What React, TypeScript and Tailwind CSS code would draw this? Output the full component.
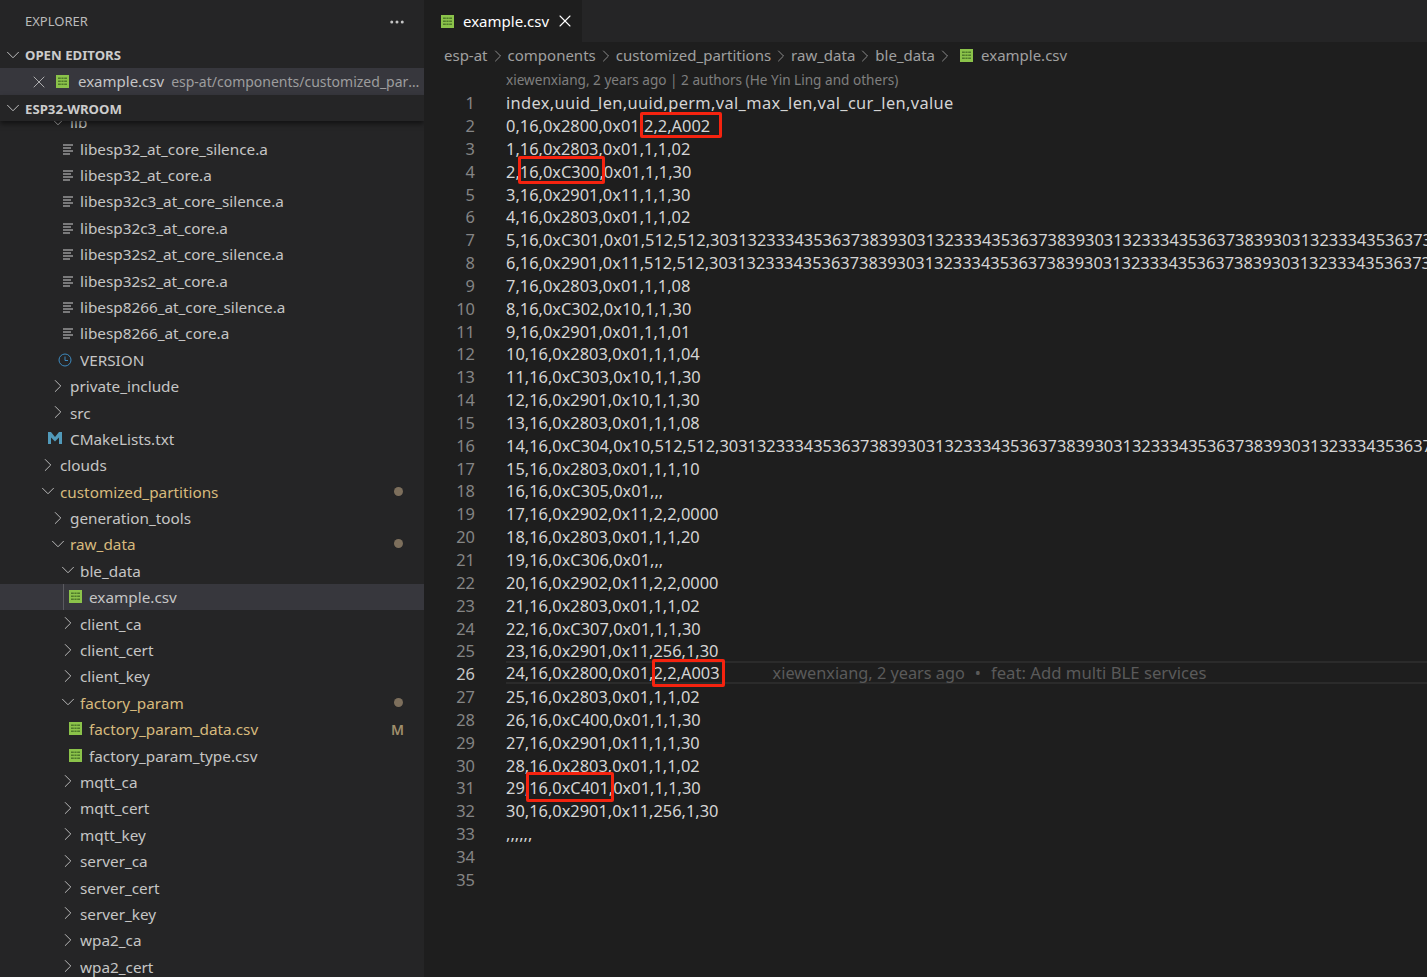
import React from 'react';
import { ChevronDown, ChevronRight, X, MoreHorizontal } from 'lucide-react';

const CsvIcon = ({ className }: { className?: string }) => (
    <svg viewBox="0 0 13 13" className={className}>
        <rect width="13" height="13" fill="#8bc34a" />
        <path fill="#4f7a2b" d="M2 2.5h2.8v1.5H2z M5.4 2.5h2.2v1.5H5.4z M8.2 2.5H11v1.5H8.2z M2 5.5h2.8V7H2z M5.4 5.5h2.2V7H5.4z M8.2 5.5H11V7H8.2z M2 8.5h2.8V10H2z M5.4 8.5h2.2V10H5.4z M8.2 8.5H11V10H8.2z" />
    </svg>
);

const LinesIcon = () => (
    <svg viewBox="0 0 10 11" className="h-[11px] w-[10px] shrink-0" stroke="#d0d0d0" strokeWidth="1.2">
        <path d="M0 1h10M0 4h8M0 7h10M0 10h7" />
    </svg>
);

const ClockIcon = () => (
    <svg viewBox="0 0 14 14" className="h-[14px] w-[14px] shrink-0" fill="none" stroke="#3d8abf" strokeWidth="1">
        <circle cx="7" cy="7" r="6" />
        <path d="M7 3.5V7.5H10" />
    </svg>
);

const CmakeIcon = () => (
    <svg viewBox="0 0 14 12" className="h-3 w-[14px] shrink-0" fill="#519aba">
        <path d="M0 12V0h3l4 5 4-5h3v12h-3V5.5L7 9.5 3 5.5V12z" />
    </svg>
);

type Row = {
    name: string;
    depth: number;
    kind: 'open' | 'closed' | 'lines' | 'clock' | 'cmake' | 'csv';
    tone?: 'modified';
    dot?: boolean;
    badge?: string;
    selected?: boolean;
};

const ROWS: Row[] = [
    { name: 'libesp32_at_core_silence.a', depth: 3, kind: 'lines' },
    { name: 'libesp32_at_core.a', depth: 3, kind: 'lines' },
    { name: 'libesp32c3_at_core_silence.a', depth: 3, kind: 'lines' },
    { name: 'libesp32c3_at_core.a', depth: 3, kind: 'lines' },
    { name: 'libesp32s2_at_core_silence.a', depth: 3, kind: 'lines' },
    { name: 'libesp32s2_at_core.a', depth: 3, kind: 'lines' },
    { name: 'libesp8266_at_core_silence.a', depth: 3, kind: 'lines' },
    { name: 'libesp8266_at_core.a', depth: 3, kind: 'lines' },
    { name: 'VERSION', depth: 3, kind: 'clock' },
    { name: 'private_include', depth: 2, kind: 'closed' },
    { name: 'src', depth: 2, kind: 'closed' },
    { name: 'CMakeLists.txt', depth: 2, kind: 'cmake' },
    { name: 'clouds', depth: 1, kind: 'closed' },
    { name: 'customized_partitions', depth: 1, kind: 'open', tone: 'modified', dot: true },
    { name: 'generation_tools', depth: 2, kind: 'closed' },
    { name: 'raw_data', depth: 2, kind: 'open', tone: 'modified', dot: true },
    { name: 'ble_data', depth: 3, kind: 'open' },
    { name: 'example.csv', depth: 4, kind: 'csv', selected: true },
    { name: 'client_ca', depth: 3, kind: 'closed' },
    { name: 'client_cert', depth: 3, kind: 'closed' },
    { name: 'client_key', depth: 3, kind: 'closed' },
    { name: 'factory_param', depth: 3, kind: 'open', tone: 'modified', dot: true },
    { name: 'factory_param_data.csv', depth: 4, kind: 'csv', tone: 'modified', badge: 'M' },
    { name: 'factory_param_type.csv', depth: 4, kind: 'csv' },
    { name: 'mqtt_ca', depth: 3, kind: 'closed' },
    { name: 'mqtt_cert', depth: 3, kind: 'closed' },
    { name: 'mqtt_key', depth: 3, kind: 'closed' },
    { name: 'server_ca', depth: 3, kind: 'closed' },
    { name: 'server_cert', depth: 3, kind: 'closed' },
    { name: 'server_key', depth: 3, kind: 'closed' },
    { name: 'wpa2_ca', depth: 3, kind: 'closed' },
    { name: 'wpa2_cert', depth: 3, kind: 'closed' },
];

const DIGITS = '30313233343536373839'.repeat(30);

const LINES = [
    'index,uuid_len,uuid,perm,val_max_len,val_cur_len,value',
    '0,16,0x2800,0x01,2,2,A002',
    '1,16,0x2803,0x01,1,1,02',
    '2,16,0xC300,0x01,1,1,30',
    '3,16,0x2901,0x11,1,1,30',
    '4,16,0x2803,0x01,1,1,02',
    '5,16,0xC301,0x01,512,512,' + DIGITS,
    '6,16,0x2901,0x11,512,512,' + DIGITS,
    '7,16,0x2803,0x01,1,1,08',
    '8,16,0xC302,0x10,1,1,30',
    '9,16,0x2901,0x01,1,1,01',
    '10,16,0x2803,0x01,1,1,04',
    '11,16,0xC303,0x10,1,1,30',
    '12,16,0x2901,0x10,1,1,30',
    '13,16,0x2803,0x01,1,1,08',
    '14,16,0xC304,0x10,512,512,' + DIGITS,
    '15,16,0x2803,0x01,1,1,10',
    '16,16,0xC305,0x01,,,',
    '17,16,0x2902,0x11,2,2,0000',
    '18,16,0x2803,0x01,1,1,20',
    '19,16,0xC306,0x01,,,',
    '20,16,0x2902,0x11,2,2,0000',
    '21,16,0x2803,0x01,1,1,02',
    '22,16,0xC307,0x01,1,1,30',
    '23,16,0x2901,0x11,256,1,30',
    '24,16,0x2800,0x01,2,2,A003',
    '25,16,0x2803,0x01,1,1,02',
    '26,16,0xC400,0x01,1,1,30',
    '27,16,0x2901,0x11,1,1,30',
    '28,16,0x2803,0x01,1,1,02',
    '29,16,0xC401,0x01,1,1,30',
    '30,16,0x2901,0x11,256,1,30',
    ',,,,,,',
    '',
    '',
];

const INDENT = ['pl-0', 'pl-[40px]', 'pl-[50px]', 'pl-[60px]', 'pl-[69px]'];

const TreeRow = ({ row }: { row: Row }) => {
    const text = row.tone === 'modified' ? 'text-[#d7ba7d]' : 'text-[#c5c5c5]';
    return (
        <div className={`relative flex h-[26.4px] items-center pr-[20px] ${INDENT[row.depth]} ${row.selected ? 'bg-[#37373d]' : ''}`}>
            {row.selected && <span className="absolute bottom-0 left-[63px] top-0 w-px bg-[#5a5a5f]" />}
            <span className="flex w-5 shrink-0 items-center justify-start">
                {row.kind === 'open' && <ChevronDown className="ml-[-3px] h-[22px] w-[22px] shrink-0 text-[#c5c5c5]" strokeWidth={1} />}
                {row.kind === 'closed' && <ChevronRight className="ml-[-3px] h-[22px] w-[22px] shrink-0 text-[#c5c5c5]" strokeWidth={1} />}
                {row.kind === 'lines' && <span className="ml-[3px] pt-[2px]"><LinesIcon /></span>}
                {row.kind === 'clock' && <span className="ml-[-2px] pt-[2px]"><ClockIcon /></span>}
                {row.kind === 'cmake' && <span className="ml-[-2px]"><CmakeIcon /></span>}
                {row.kind === 'csv' && <CsvIcon className="h-[13px] w-[13px] shrink-0" />}
            </span>
            <span className={`flex-1 truncate pt-[2px] text-[15.3px] ${text}`}>{row.name}</span>
            {row.dot && <span className="mr-[1px] h-[9px] w-[9px] rounded-full bg-[#7d6f5c]" />}
            {row.badge && <span className="pt-[2px] text-[14px] font-semibold text-[#a08f6c]">{row.badge}</span>}
        </div>
    );
};

const Crumb = () => <ChevronRight className="h-5 w-5 shrink-0" strokeWidth={1} />;

export default function App() {
    return (
        <div className="relative flex h-[977px] w-[1427px] overflow-hidden bg-[#1e1e1e] font-['Noto_Sans',sans-serif]">
            <aside className="flex w-[424px] shrink-0 flex-col overflow-hidden bg-[#252526]">
                <div className="flex h-[42px] shrink-0 items-center justify-between pl-[25px] pr-[18px] pt-[2px] text-[13px] text-[#bbbbbb]">
                    <span>EXPLORER</span>
                    <MoreHorizontal className="h-[18px] w-[18px] text-[#c5c5c5]" />
                </div>
                <div className="flex h-[26px] shrink-0 items-center pl-[2px] text-[13.2px] font-bold text-[#cccccc]">
                    <ChevronDown className="mr-[1px] h-[22px] w-[22px]" strokeWidth={1} />
                    <span className="pt-[2px]">OPEN EDITORS</span>
                </div>
                <div className="flex h-[27px] shrink-0 items-center bg-[#37373d] pl-[29px] pr-[3px]">
                    <X className="mr-[7px] h-5 w-5 shrink-0 text-[#c5c5c5]" strokeWidth={1} />
                    <CsvIcon className="mr-[9px] h-[13px] w-[13px] shrink-0" />
                    <span className="mr-[7px] shrink-0 text-[15px] text-[#c5c5c5]">example.csv</span>
                    <span className="truncate text-[14px] text-[#9d9d9d]">esp-at/components/customized_partitions/raw_data/ble_data</span>
                </div>
                <div className="relative z-10 flex h-[26px] shrink-0 items-center bg-[#252526] pl-[2px] text-[13.2px] font-bold text-[#cccccc] shadow-[0_3px_5px_rgba(0,0,0,0.5)]">
                    <ChevronDown className="mr-[1px] h-[22px] w-[22px]" strokeWidth={1} />
                    <span className="pt-[4px]">ESP32-WROOM</span>
                </div>
                <div className="mt-[-12.5px]">
                    <TreeRow row={{ name: 'lib', depth: 2, kind: 'open' }} />
                    {ROWS.map((row) => (
                        <TreeRow key={row.name + row.depth} row={row} />
                    ))}
                </div>
            </aside>

            <main className="flex min-w-0 flex-1 flex-col">
                <div className="flex h-[42px] shrink-0 bg-[#252526]">
                    <div className="flex w-[158px] items-center bg-[#1e1e1e] pl-[17px] text-[15px] text-white">
                        <CsvIcon className="mr-[9px] h-[13px] w-[13px] shrink-0" />
                        <span>example.csv</span>
                        <X className="ml-[6px] h-5 w-5" strokeWidth={1.3} />
                    </div>
                </div>
                <div className="flex h-[27px] shrink-0 items-center pl-[20px] text-[15px] text-[#a0a0a0]">
                    <span>esp-at</span>
                    <Crumb />
                    <span>components</span>
                    <Crumb />
                    <span>customized_partitions</span>
                    <Crumb />
                    <span>raw_data</span>
                    <Crumb />
                    <span>ble_data</span>
                    <Crumb />
                    <CsvIcon className="ml-[5px] mr-[8px] h-[13px] w-[13px] shrink-0" />
                    <span>example.csv</span>
                </div>
                <div className="flex h-[21px] shrink-0 items-center pl-[82px] pt-[2px] text-[13.6px] text-[#7f7f7f]">
                    xiewenxiang, 2 years ago | 2 authors (He Yin Ling and others)
                </div>
                <div className="min-w-0 flex-1 overflow-hidden">
                    {LINES.map((line, i) => (
                        <div key={i} className="flex h-[22.85px] items-center whitespace-nowrap">
                            <span className={`w-[51px] shrink-0 pt-[4px] text-right text-[16.4px] ${i === 25 ? 'text-[#c6c6c6]' : 'text-[#858585]'}`}>{i + 1}</span>
                            <span className={`ml-[31px] flex h-full flex-1 items-center text-[16.4px] text-[#d4d4d4] ${i === 25 ? 'border-y-2 border-[#2b2b2b] pt-[1px]' : 'pt-[4px]'} ${i === 0 ? 'tracking-[0.35px]' : ''}`}>
                                <span>{line}</span>
                                {i === 25 && (
                                    <span className="ml-[53px] text-[16.3px] text-[#5a5a5a]">
                                        xiewenxiang, 2 years ago
                                        <span className="mx-[10px]">•</span>
                                        <span className="text-[16.7px]">feat: Add multi BLE services</span>
                                    </span>
                                )}
                            </span>
                        </div>
                    ))}
                </div>
            </main>

            <div className="absolute left-[640px] top-[112px] h-[26px] w-[82px] rounded-[2px] border-[3px] border-[#f5230f]" />
            <div className="absolute left-[518px] top-[156px] h-[28px] w-[87px] rounded-[2px] border-[3px] border-[#f5230f]" />
            <div className="absolute left-[652px] top-[659px] h-[28px] w-[73px] rounded-[2px] border-[3px] border-[#f5230f]" />
            <div className="absolute left-[526px] top-[772px] h-[30px] w-[88px] rounded-[2px] border-[3px] border-[#f5230f]" />
        </div>
    );
}
